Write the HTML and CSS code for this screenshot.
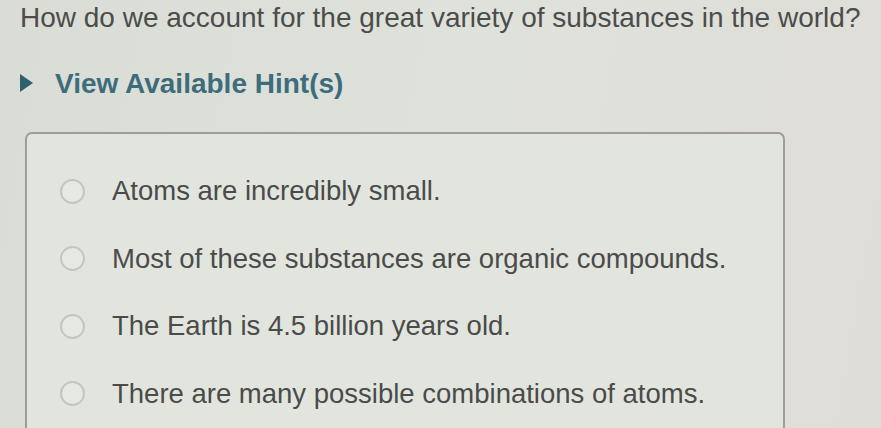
FILE: index.html
```html
<!DOCTYPE html>
<html>
<head>
<meta charset="utf-8">
<link rel="stylesheet" href="styles.css">
</head>
<body>
<div class="page">
  <p class="question">How do we account for the great variety of substances in the world?</p>
  <div class="hint">
    <span class="tri"></span>
    <span class="hint-text">View Available Hint(s)</span>
  </div>
  <div class="box">
    <div class="opt"><span class="radio"></span><span class="label">Atoms are incredibly small.</span></div>
    <div class="opt"><span class="radio"></span><span class="label">Most of these substances are organic compounds.</span></div>
    <div class="opt"><span class="radio"></span><span class="label">The Earth is 4.5 billion years old.</span></div>
    <div class="opt"><span class="radio"></span><span class="label">There are many possible combinations of atoms.</span></div>
  </div>
</div>
</body>
</html>
```
FILE: styles.css
```css
html, body {
  margin: 0;
  padding: 0;
  height: 100%;
  overflow: hidden;
}
body {
  background: linear-gradient(100deg, #dadDd6 0%, #dfe2db 50%, #dfddd7 100%);
  font-family: "Liberation Sans", Arial, sans-serif;
  color: #4b4c4b;
}
.page {
  padding: 0 0 0 20px;
}
.question {
  margin: 0;
  padding-top: 2px;
  font-size: 28px;
  line-height: 32px;
  white-space: nowrap;
}
.hint {
  display: flex;
  align-items: center;
  gap: 22px;
  margin-top: 34px;
  height: 32px;
}
.tri {
  width: 0;
  height: 0;
  margin-top: -3px;
  border-top: 9px solid transparent;
  border-bottom: 9px solid transparent;
  border-left: 13px solid #2f6070;
}
.hint-text {
  font-weight: bold;
  font-size: 28px;
  line-height: 32px;
  color: #3d6d7c;
}
.box {
  margin: 32px 0 0 5px;
  width: 760px;
  height: 296px;
  border: 2px solid #9c9e99;
  border-bottom: none;
  border-radius: 7px 7px 0 0;
  background: #e2e5de;
  box-sizing: border-box;
  padding-top: 41px;
  padding-left: 33px;
  display: flex;
  flex-direction: column;
  gap: 35.5px;
}
.opt {
  display: flex;
  align-items: center;
  gap: 27px;
  height: 32px;
}
.radio {
  width: 21px;
  height: 21px;
  border: 2px solid #c3c6bf;
  border-radius: 50%;
  background: #e6e9e2;
  flex: none;
}
.label {
  font-size: 27.5px;
  line-height: 32px;
  color: #4a4b4a;
  white-space: nowrap;
}
```
